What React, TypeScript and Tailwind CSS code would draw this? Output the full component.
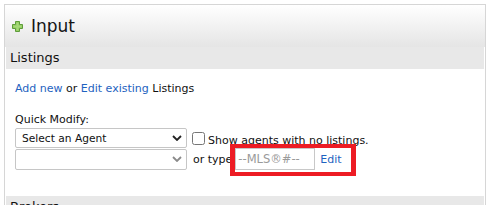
import React from "react";

function Chevron({ color }: { color: string }) {
  return (
    <svg width="10" height="6" viewBox="0 0 10 6" className="absolute right-[4px] top-1/2 -translate-y-1/2 pointer-events-none">
      <path d="M1 1 L5 5 L9 1" fill="none" stroke={color} strokeWidth="1.8" />
    </svg>
  );
}

function SelectBox({ text, h, arrow }: { text: string; h: string; arrow: string }) {
  return (
    <div className={`relative w-[172px] ${h} border border-[#c6c6c6] rounded-[2px] bg-white flex items-center pl-[6px] text-[10.67px] text-[#111] shrink-0`}>
      <span>{text}</span>
      <Chevron color={arrow} />
    </div>
  );
}

function Plus() {
  return (
    <svg width="11" height="11" viewBox="0 0 11 11" className="shrink-0">
      <path
        d="M3.5 0.5 H7.5 V3.5 H10.5 V7.5 H7.5 V10.5 H3.5 V7.5 H0.5 V3.5 H3.5 Z"
        fill="#8ec95c"
        stroke="#5e9c3a"
        strokeWidth="1"
      />
      <path d="M4.5 1.5 H6.5 V4.5 H9.5 V6.5 H6.5 V9.5 H4.5 V6.5 H1.5 V4.5 H4.5 Z" fill="#a6d978" />
    </svg>
  );
}

export default function App() {
  return (
    <div className="relative w-[491px] h-[205px] overflow-hidden bg-white font-['DejaVu_Sans',Verdana,sans-serif] text-[#111]">
      <div className="ml-[4px] mt-[4px] w-[482px] h-[230px] border border-[#d6d6d6] border-b-0">
        <div className="h-[42px] bg-gradient-to-b from-[#ffffff] to-[#e5e5e5] flex items-center pl-[7px]">
          <Plus />
          <span className="ml-[8px] text-[17px] leading-[20px] text-[#141414]">Input</span>
        </div>
        <div className="mx-[1px] h-[22px] bg-[#e8e8e8] flex items-center pl-[4px] text-[13px] leading-[16px]">
          Listings
        </div>
        <div className="h-[127px] pl-[10px] pt-[13px] text-[11px] leading-[13px]">
          <div>
            <a className="text-[#1e62c0] cursor-pointer">Add new</a> or{" "}
            <a className="text-[#1e62c0] cursor-pointer">Edit existing</a> Listings
          </div>
          <div className="mt-[18px]">Quick Modify:</div>
          <div className="mt-[2px] flex items-center">
            <SelectBox text="Select an Agent" h="h-[20px]" arrow="#222" />
            <input type="checkbox" className="m-0 ml-[5px] w-[13px] h-[13px]" />
            <span className="ml-[3px] mt-[4px]">Show agents with no listings.</span>
          </div>
          <div className="flex items-center">
            <SelectBox text="" h="h-[21px]" arrow="#8a8a8a" />
            <span className="ml-[6px]">or type</span>
            <input
              className="ml-[3px] w-[80px] h-[22px] border border-[#c8c8c8] bg-white pl-[2px] text-[11.5px] placeholder:text-[#9a9a9a] outline-none"
              placeholder="--MLS®#--"
            />
            <a className="ml-[5px] text-[#1e62c0] cursor-pointer">Edit</a>
          </div>
        </div>
        <div className="mx-[1px] h-[22px] bg-[#e8e8e8] flex items-center pl-[4px] text-[13px] leading-[16px]">
          Brokers
        </div>
      </div>
      <div className="absolute left-[230px] top-[144px] w-[126px] h-[32px] border-y-[4px] border-x-[5px] border-[#ed1c24]" />
    </div>
  );
}
